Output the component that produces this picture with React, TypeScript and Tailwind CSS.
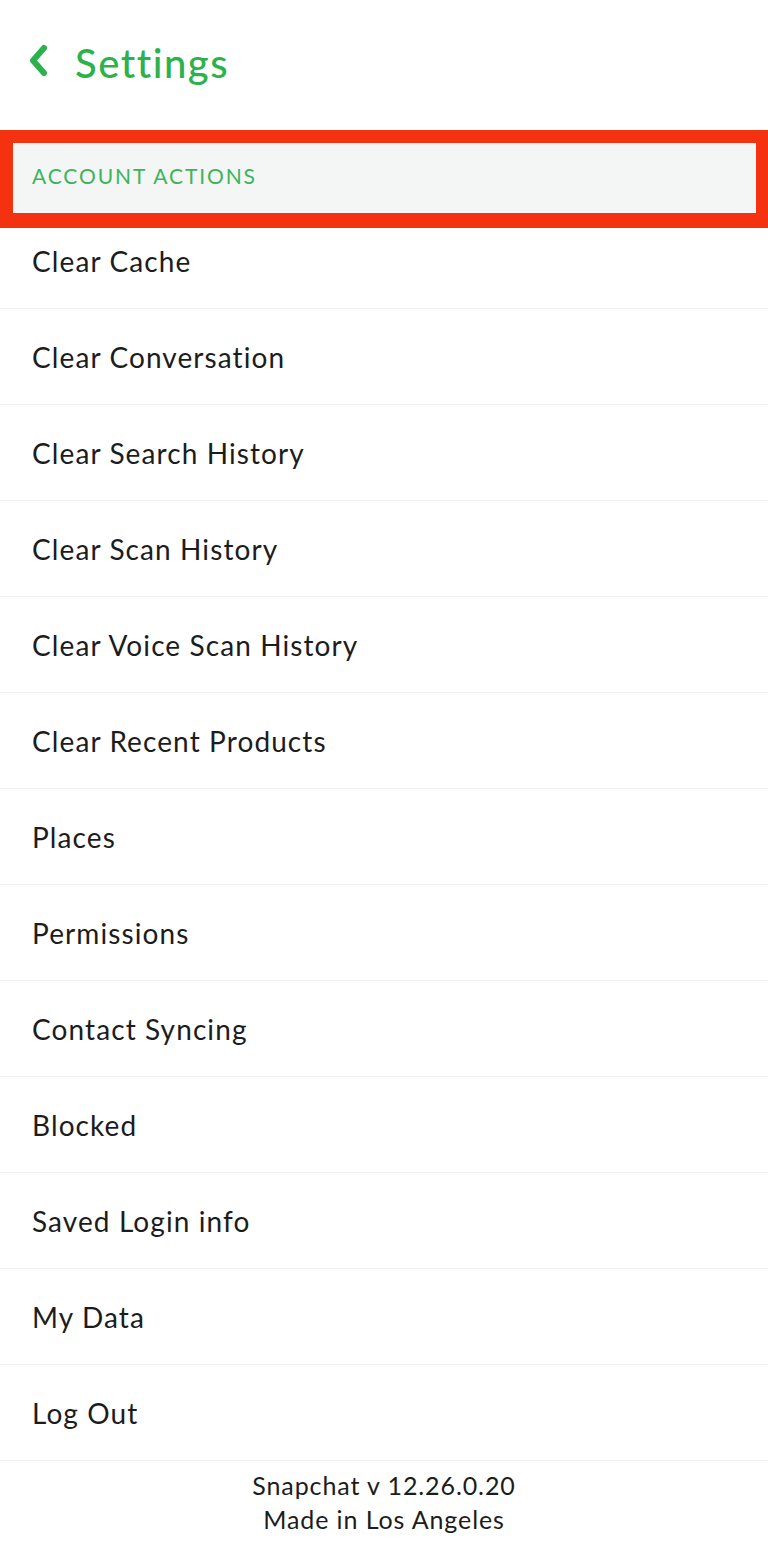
import React from 'react';

const items = [
  'Clear Cache',
  'Clear Conversation',
  'Clear Search History',
  'Clear Scan History',
  'Clear Voice Scan History',
  'Clear Recent Products',
  'Places',
  'Permissions',
  'Contact Syncing',
  'Blocked',
  'Saved Login info',
  'My Data',
  'Log Out',
];

export default function App() {
  return (
    <div className="w-[768px] min-h-[1554px] bg-white font-['Lato',sans-serif] text-[#1c1c1c]">
      {/* header */}
      <div className="h-[130px] flex items-start pt-[40px] pl-[28px]">
        <svg width="20" height="33" viewBox="0 0 20 33" className="mt-[4px]">
          <path d="M16 4 L5 16.5 L16 29" fill="none" stroke="#2bb24c" strokeWidth="6" strokeLinecap="round" strokeLinejoin="round" />
        </svg>
        <span className="ml-[27px] text-[40px] leading-[46px] font-medium tracking-[1.5px] text-[#2bb24c]">Settings</span>
      </div>

      {/* highlighted section header */}
      <div className="relative z-10 -mb-[15px] h-[98px] border-[13px] border-b-[15px] border-r-[12px] border-[#f5320f] bg-[#f4f6f5] flex items-center pl-[19px] pb-[4px]">
        <span className="text-[21px] text-[#3db45a] tracking-[1.9px]">ACCOUNT ACTIONS</span>
      </div>

      <div className="flex flex-col">
        {items.map((item) => (
          <div key={item} className="h-[96px] flex items-center pl-[32px] border-b border-[#f1f1f1] text-[28px] tracking-[1.1px]">
            {item}
          </div>
        ))}
      </div>

      <div className="pt-[7px] flex flex-col items-center text-[25px] leading-[34px] tracking-[0.9px]">
        <span>Snapchat v 12.26.0.20</span>
        <span>Made in Los Angeles</span>
      </div>
    </div>
  );
}
